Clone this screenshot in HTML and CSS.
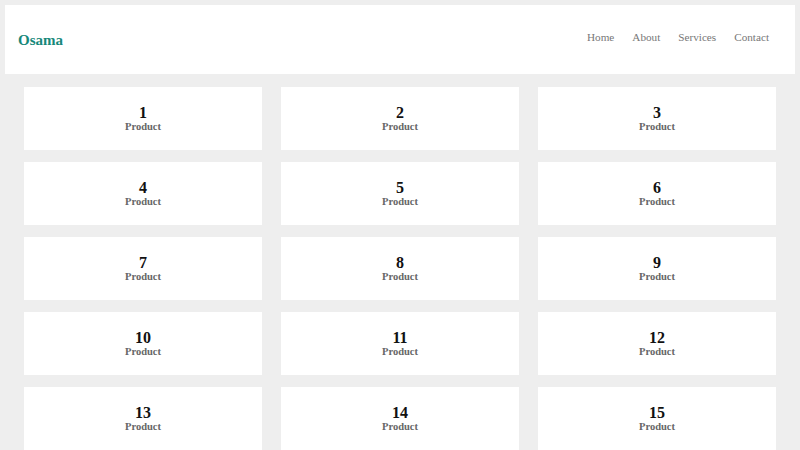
FILE: index.html
```html
<!DOCTYPE html>
<html lang="en">
<head>
    <meta charset="UTF-8">
    <meta name="viewport" content="width=device-width, initial-scale=1.0">
    <title>Osama</title>
    <link rel="stylesheet" href="styles.css">
</head>
<body>
    <header class="header">
        <div class="logo">Osama</div>
        <nav class="nav">
            <a href="#">Home</a>
            <a href="#">About</a>
            <a href="#">Services</a>
            <a href="#">Contact</a>
        </nav>
    </header>

    <main class="products">
        <div class="card"><span class="num">1</span><span class="label">Product</span></div>
        <div class="card"><span class="num">2</span><span class="label">Product</span></div>
        <div class="card"><span class="num">3</span><span class="label">Product</span></div>
        <div class="card"><span class="num">4</span><span class="label">Product</span></div>
        <div class="card"><span class="num">5</span><span class="label">Product</span></div>
        <div class="card"><span class="num">6</span><span class="label">Product</span></div>
        <div class="card"><span class="num">7</span><span class="label">Product</span></div>
        <div class="card"><span class="num">8</span><span class="label">Product</span></div>
        <div class="card"><span class="num">9</span><span class="label">Product</span></div>
        <div class="card"><span class="num">10</span><span class="label">Product</span></div>
        <div class="card"><span class="num">11</span><span class="label">Product</span></div>
        <div class="card"><span class="num">12</span><span class="label">Product</span></div>
        <div class="card"><span class="num">13</span><span class="label">Product</span></div>
        <div class="card"><span class="num">14</span><span class="label">Product</span></div>
        <div class="card"><span class="num">15</span><span class="label">Product</span></div>
    </main>
</body>
</html>
```

FILE: styles.css
```css
body {
    font-family: "Liberation Serif", "Times New Roman", serif;
    background-color: #eeeeee;
    margin: 0;
    padding: 5px;
}

.header {
    display: flex;
    justify-content: space-between;
    align-items: center;
    height: 69px;
    background-color: white;
    padding: 0 26px 0 13px;
    box-sizing: border-box;
}

.logo {
    color: #16887a;
    font-size: 15px;
    font-weight: bold;
    line-height: 1;
    padding-top: 2px;
}

.nav {
    display: flex;
    gap: 18px;
    padding-bottom: 3px;
}

.nav a {
    color: #777;
    font-size: 11.2px;
    line-height: 1;
    text-decoration: none;
}

.products {
    display: grid;
    grid-template-columns: repeat(3, 1fr);
    column-gap: 19px;
    row-gap: 12px;
    margin: 13px 19px 0;
}

.card {
    display: flex;
    flex-direction: column;
    align-items: center;
    justify-content: center;
    height: 63px;
    background-color: white;
}

.num {
    font-size: 16px;
    font-weight: bold;
    line-height: 1;
    color: #111;
}

.label {
    font-size: 10.5px;
    font-weight: bold;
    line-height: 1;
    color: #666;
    margin-top: 1px;
}
```
